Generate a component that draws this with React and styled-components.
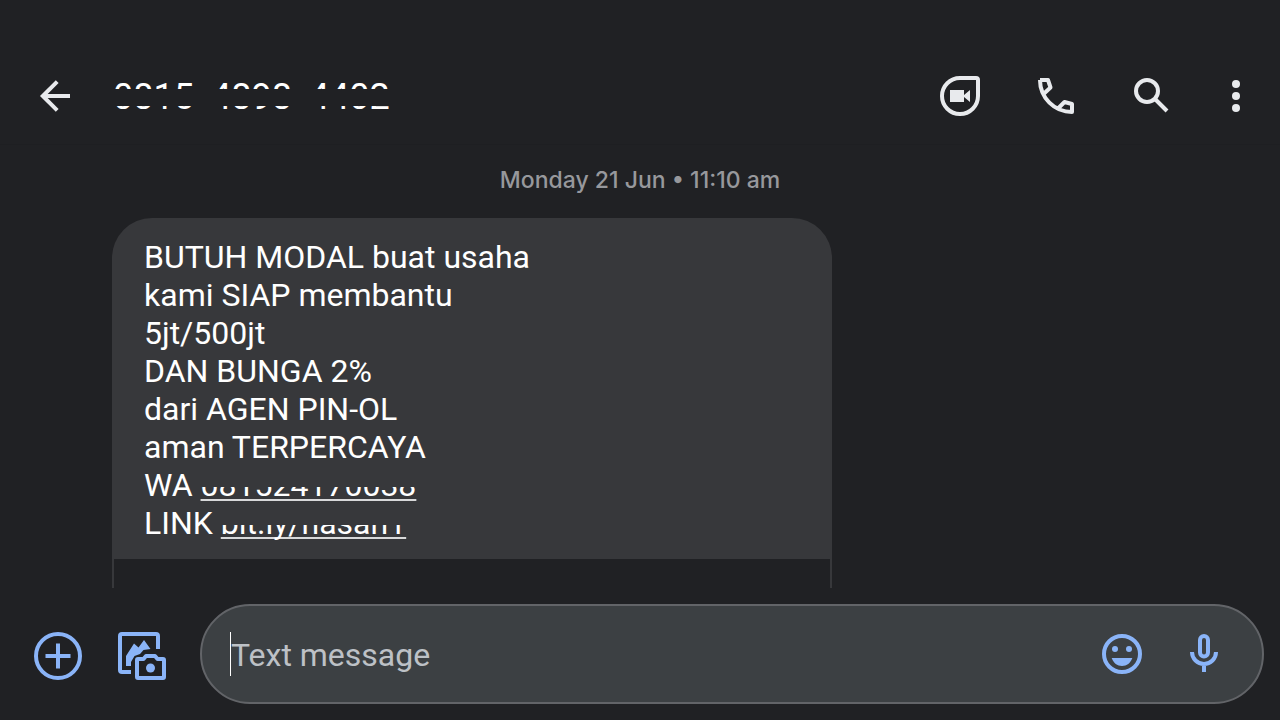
import React from "react";
import styled, { createGlobalStyle } from "styled-components";

const color = {
  page: "#202124",
  bubble: "#37383b",
  field: "#3c4043",
  fieldLine: "#626468",
  icon: "#e8eaed",
  accent: "#8ab4f8",
  muted: "#97989c",
  hint: "#bdc1c6",
  text: "#ffffff",
};

const GlobalStyle = createGlobalStyle`
  * { box-sizing: border-box; }
  body {
    margin: 0;
    background: ${color.page};
    color: ${color.text};
    font-family: Roboto, "Liberation Sans", sans-serif;
  }
`;

const Screen = styled.div`
  display: flex;
  flex-direction: column;
  height: 100vh;
`;

const Header = styled.header`
  display: flex;
  align-items: center;
  flex: none;
  padding: 71px 32px 23px;
  border-bottom: 1px solid #1e1f22;
`;

const IconButton = styled.button`
  display: flex;
  align-items: center;
  justify-content: center;
  flex: none;
  width: ${(p) => p.$size || 48}px;
  height: 48px;
  padding: 0;
  border: 0;
  background: none;
  color: ${(p) => (p.$accent ? color.accent : color.icon)};
  cursor: pointer;
`;

const Title = styled.h1`
  position: relative;
  display: flex;
  gap: 17px;
  margin: 0 auto 0 33px;
  padding-top: 2px;
  font-size: 36px;
  line-height: 48px;
  font-weight: 400;

  &::after {
    content: "";
    position: absolute;
    inset: 18px 0 15px;
    background: ${color.page};
  }
`;

const Actions = styled.nav`
  display: flex;
  gap: 48px;
`;

const Thread = styled.main`
  display: flex;
  flex-direction: column;
  flex: 1;
  min-height: 0;
  overflow: hidden;
`;

const Stamp = styled.time`
  margin: 20px 0 23px;
  text-align: center;
  font-family: Inter, Roboto, sans-serif;
  font-size: 23px;
  font-weight: 500;
  line-height: 30px;
  color: ${color.muted};
`;

const Message = styled.article`
  display: flex;
  flex-direction: column;
  flex: 1;
  width: 100%;
  max-width: 832px;
  padding-left: 112px;
`;

const Bubble = styled.p`
  margin: 0;
  padding: 20px 32px 17px;
  border-radius: 40px 40px 0 0;
  background: ${color.bubble};
  font-size: 32px;
  line-height: 38px;
`;

const Preview = styled.div`
  flex: 1;
  border: solid ${color.bubble};
  border-width: 0 2px;
`;

const MaskedLink = styled.a`
  position: relative;
  display: inline-block;
  color: inherit;
  text-decoration-color: #d8d9da;
  text-decoration-thickness: 2px;
  text-underline-offset: 3px;
  text-decoration-skip-ink: none;

  &::after {
    content: "";
    position: absolute;
    inset: 0 0 17px;
    background: ${color.bubble};
  }
`;

const Composer = styled.form`
  display: flex;
  align-items: center;
  flex: none;
  padding: 16px 16px 16px 34px;
`;

const Tools = styled.div`
  display: flex;
  gap: 36px;
  padding-top: 4px;
  margin-right: 34px;
`;

const Field = styled.div`
  display: flex;
  align-items: center;
  flex: 1;
  height: 100px;
  padding: 0 34px 0 28px;
  border: 2px solid ${color.fieldLine};
  border-radius: 50px;
  background: ${color.field};
`;

const Caret = styled.span`
  width: 1px;
  height: 44px;
  background: ${color.text};
`;

const MessageInput = styled.input`
  flex: 1;
  min-width: 0;
  height: 48px;
  padding: 2px 0 0;
  border: 0;
  outline: 0;
  background: none;
  color: ${color.text};
  caret-color: transparent;
  font-family: inherit;
  font-size: 32px;

  &::placeholder {
    color: ${color.hint};
    opacity: 1;
  }
`;

const FieldActions = styled.div`
  display: flex;
  gap: 34px;
`;

const Svg = styled.svg`
  display: block;
  flex: none;
  fill: none;
  stroke: currentColor;
  stroke-width: 4;

  .solid {
    fill: currentColor;
    stroke: none;
  }
`;

function Icon({ size = 48, children }) {
  return (
    <Svg width={size} height={size} viewBox={`0 0 ${size} ${size}`} aria-hidden="true">
      {children}
    </Svg>
  );
}

const BackIcon = () => (
  <Icon>
    <path d="M38 24H12M25.2 9.6L10.8 24l14.4 14.4" />
  </Icon>
);

const VideoIcon = () => (
  <Icon size={40}>
    <path d="M20 2h16a2 2 0 0 1 2 2v16A18 18 0 1 1 20 2z" />
    <path className="solid" d="M10 14h14v5l6-5v12l-6-5v5H10z" />
  </Icon>
);

const PhoneIcon = () => (
  <Icon size={36}>
    <path strokeLinejoin="round" d="M2 2A32 32 0 0 0 34 34V26l-7.500-2L20 30.500M2 2h8l2.500 7.500L5.500 16" />
  </Icon>
);

const SearchIcon = () => (
  <Icon>
    <circle cx="19" cy="19" r="11" />
    <path d="M27 27l12 12" />
  </Icon>
);

const MoreIcon = () => (
  <Icon>
    <circle className="solid" cx="24" cy="12" r="4" />
    <circle className="solid" cx="24" cy="24" r="4" />
    <circle className="solid" cx="24" cy="36" r="4" />
  </Icon>
);

const AddIcon = () => (
  <Icon>
    <circle cx="24" cy="24" r="22" />
    <path d="M24 11.500v25M11.500 24h25" />
  </Icon>
);

const GalleryIcon = () => (
  <Icon>
    <path d="M40 17V4a2 2 0 0 0-2-2H4a2 2 0 0 0-2 2v34a2 2 0 0 0 2 2h9" />
    <path
      className="solid"
      d="M8 34V24l8-12.500 4.500 4L26 8l6.500 9-7 1-3.500 4-5.500 2L13 30v4z"
    />
    <path
      strokeLinejoin="round"
      d="M20 27h5.500l2.500-3h9l2.500 3H45a1 1 0 0 1 1 1v17a1 1 0 0 1-1 1H20a1 1 0 0 1-1-1V28a1 1 0 0 1 1-1z"
    />
    <circle className="solid" cx="32.500" cy="36" r="4.500" />
  </Icon>
);

const EmojiIcon = () => (
  <Icon size={40}>
    <circle cx="20" cy="20" r="18" />
    <circle className="solid" cx="13" cy="15" r="3" />
    <circle className="solid" cx="27" cy="15" r="3" />
    <path className="solid" d="M9.700 24h20.600C28.600 29 24.800 32 20 32S11.400 29 9.700 24z" />
  </Icon>
);

const MicIcon = () => (
  <Icon size={40}>
    <rect x="16" y="2" width="8" height="20.500" rx="4" />
    <path d="M8 18a12 12 0 0 0 24 0M20 30v8" />
  </Icon>
);

const lines = [
  "BUTUH MODAL buat usaha",
  "kami SIAP membantu",
  "5jt/500jt",
  "DAN BUNGA 2%",
  "dari AGEN PIN-OL",
  "aman TERPERCAYA",
];

export default function App() {
  return (
    <Screen>
      <GlobalStyle />
      <Header>
        <IconButton aria-label="Back"><BackIcon /></IconButton>
        <Title>
          <span>0815</span>
          <span>4898</span>
          <span>4402</span>
        </Title>
        <Actions aria-label="Conversation actions">
          <IconButton aria-label="Video call"><VideoIcon /></IconButton>
          <IconButton aria-label="Call"><PhoneIcon /></IconButton>
          <IconButton aria-label="Search"><SearchIcon /></IconButton>
          <IconButton aria-label="More options" $size={24}><MoreIcon /></IconButton>
        </Actions>
      </Header>
      <Thread>
        <Stamp>Monday 21 Jun • 11:10 am</Stamp>
        <Message>
          <Bubble>
            {lines.map((line) => (
              <React.Fragment key={line}>{line}<br /></React.Fragment>
            ))}
            WA <MaskedLink href="#wa">081524170038</MaskedLink>
            <br />
            LINK <MaskedLink href="#link">bit.ly/hasan1</MaskedLink>
          </Bubble>
          <Preview />
        </Message>
      </Thread>
      <Composer onSubmit={(e) => e.preventDefault()}>
        <Tools>
          <IconButton type="button" $accent aria-label="Add"><AddIcon /></IconButton>
          <IconButton type="button" $accent aria-label="Gallery"><GalleryIcon /></IconButton>
        </Tools>
        <Field>
          <Caret />
          <MessageInput type="text" placeholder="Text message" aria-label="Text message" />
          <FieldActions>
            <IconButton type="button" $accent aria-label="Emoji"><EmojiIcon /></IconButton>
            <IconButton type="button" $accent aria-label="Voice message"><MicIcon /></IconButton>
          </FieldActions>
        </Field>
      </Composer>
    </Screen>
  );
}
